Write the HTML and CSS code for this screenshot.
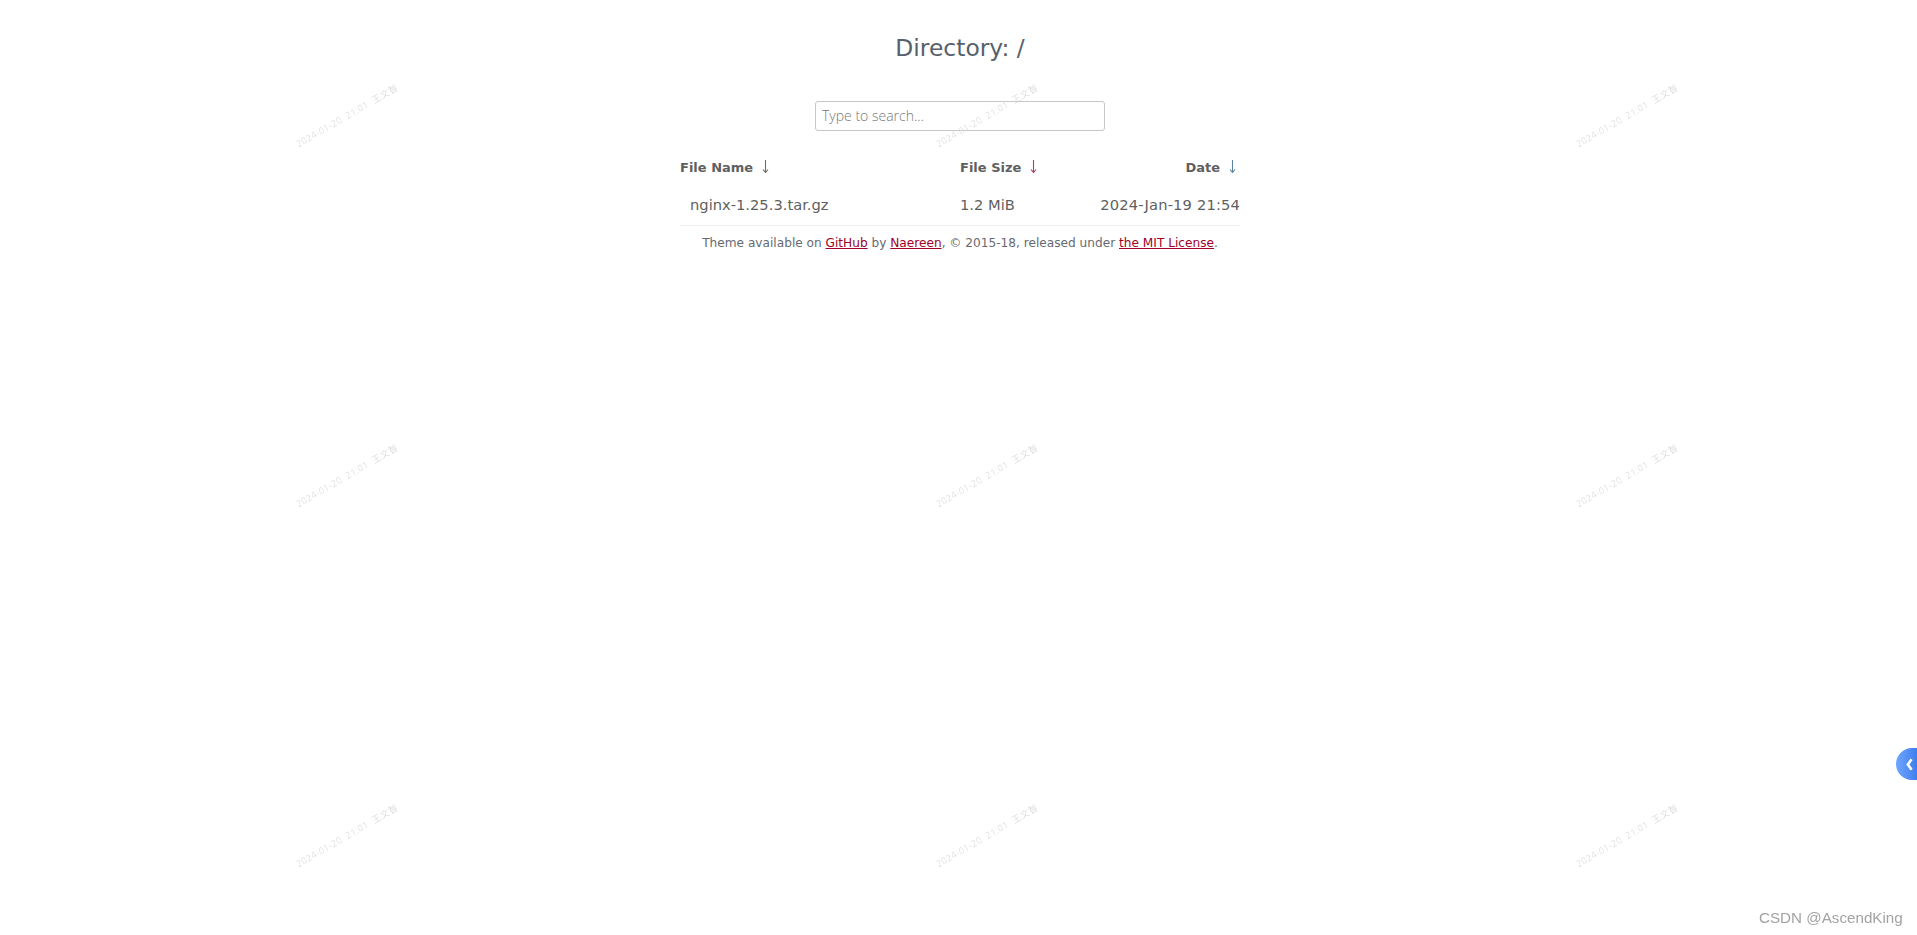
FILE: index.html
```html
<!DOCTYPE html>
<html lang="en">
<head>
<meta charset="utf-8">
<title>Directory: /</title>
<link rel="stylesheet" href="styles.css">
</head>
<body>
<main class="page">
  <h1 class="title">Directory: /</h1>
  <div class="search-wrap"><input class="search" type="text" placeholder="Type to search..."></div>
  <table class="listing">
    <thead>
      <tr>
        <th class="col-name">File Name<svg class="arrow arrow-green" width="7" height="13" viewBox="0 0 7 13"><path d="M3.5 0v12.5M1 9.5l2.5 3 2.5-3"/></svg></th>
        <th class="col-size">File Size<svg class="arrow arrow-red" width="7" height="13" viewBox="0 0 7 13"><path d="M3.5 0v12.5M1 9.5l2.5 3 2.5-3"/></svg></th>
        <th class="col-date">Date<svg class="arrow arrow-blue" width="7" height="13" viewBox="0 0 7 13"><path d="M3.5 0v12.5M1 9.5l2.5 3 2.5-3"/></svg></th>
      </tr>
    </thead>
    <tbody>
      <tr>
        <td class="col-name cell-name">nginx-1.25.3.tar.gz</td>
        <td class="col-size">1.2 MiB</td>
        <td class="col-date cell-date">2024-Jan-19 21:54</td>
      </tr>
    </tbody>
  </table>
  <footer class="foot">Theme available on <a href="#">GitHub</a> by <a href="#">Naereen</a>, © 2015-18, released under <a href="#">the MIT License</a>.</footer>
</main>
<div class="marks">
  <span class="mark">2024-01-20&nbsp; 21:01&nbsp; 王文智</span>
  <span class="mark">2024-01-20&nbsp; 21:01&nbsp; 王文智</span>
  <span class="mark">2024-01-20&nbsp; 21:01&nbsp; 王文智</span>
  <span class="mark">2024-01-20&nbsp; 21:01&nbsp; 王文智</span>
  <span class="mark">2024-01-20&nbsp; 21:01&nbsp; 王文智</span>
  <span class="mark">2024-01-20&nbsp; 21:01&nbsp; 王文智</span>
  <span class="mark">2024-01-20&nbsp; 21:01&nbsp; 王文智</span>
  <span class="mark">2024-01-20&nbsp; 21:01&nbsp; 王文智</span>
  <span class="mark">2024-01-20&nbsp; 21:01&nbsp; 王文智</span>
</div>
<button class="side-tab" type="button" aria-label="Open">
  <svg class="chev" width="7" height="13" viewBox="0 0 7 13"><path d="M5.6 1.2 1.8 6.5l3.8 5.3" fill="none" stroke="#fff" stroke-width="2.6"/></svg>
</button>
<div class="credit">CSDN @AscendKing</div>
</body>
</html>
```

FILE: styles.css
```css
* { box-sizing: border-box; }
html, body { margin: 0; height: 100%; background: #fff; overflow: hidden; }
body { font-family: "DejaVu Sans", Verdana, sans-serif; color: #555; }
.page { width: 560px; margin: 0 0 0 680px; display: flex; flex-direction: column; }
.title { margin: 32px 0 0; font-size: 23.4px; line-height: 32px; font-weight: 400; text-align: center; color: #56616c; }
.search-wrap { display: flex; justify-content: center; margin-top: 37px; }
.search { width: 290px; height: 30px; padding: 0 6px 2px; border: 1px solid #c8c8c8; border-radius: 3px; background: transparent; font-family: "Open Sans", sans-serif; font-size: 14px; font-weight: 300; }
.search::placeholder { color: #777; opacity: 1; }
.listing { width: 560px; margin-top: 21px; border-collapse: collapse; table-layout: fixed; border-bottom: 1px solid #eee; }
.listing th { font-size: 13px; font-weight: 700; height: 30px; padding: 0; color: #5f5f5f; }
.listing td { font-size: 14.7px; height: 43px; padding: 3px 0 0; color: #5f5f5f; }
.col-name { width: 280px; text-align: left; }
.col-size { width: 140px; text-align: left; }
.col-date { text-align: right; }
.listing .cell-name { padding-left: 10px; }
.listing .cell-date { letter-spacing: .15px; }
.arrow { margin: 0 4px 0 9px; vertical-align: -1px; fill: none; stroke-width: 1.1; }
.arrow-green { stroke: #6b705c; }
.arrow-red { stroke: #a8405f; }
.arrow-blue { stroke: #5a84a0; }
.foot { font-size: 12.15px; line-height: 16px; margin-top: 9px; text-align: center; color: #666a70; }
.foot a { color: #a00028; text-decoration: underline; }
.marks { position: fixed; left: 27px; top: -65px; display: grid; grid-template-columns: repeat(3, 640px); grid-auto-rows: 360px; pointer-events: none; }
.mark { align-self: center; justify-self: center; transform: rotate(-30deg); font-family: "Open Sans", "Noto Sans CJK SC", sans-serif; font-weight: 300; font-size: 9px; letter-spacing: .45px; color: #d2d2d2; white-space: nowrap; }
.side-tab { position: fixed; right: 0; top: 748px; width: 21px; height: 32px; padding: 0 0 0 10px; border: 0; border-radius: 16px 0 0 16px; background: linear-gradient(90deg, #70a5ff, #3e7fee); display: flex; align-items: center; }
.chev { display: block; }
.credit { position: fixed; left: 1759px; top: 908px; font-family: "Liberation Sans", sans-serif; font-size: 15.2px; line-height: 20px; color: #a3a3a3; white-space: nowrap; }
```
